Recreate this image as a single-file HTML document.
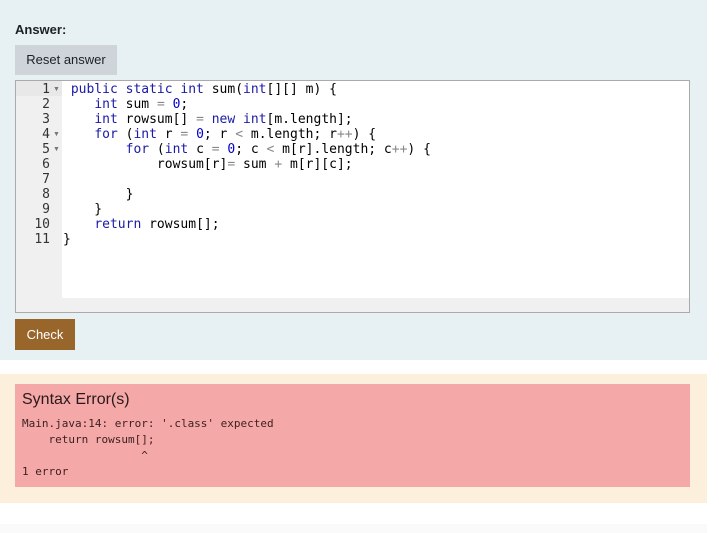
<!DOCTYPE html>
<html><head><style>
body{margin:0;width:719px;height:533px;background:#fff;font-family:"Liberation Sans",sans-serif;position:relative;overflow:hidden}
.top{position:absolute;left:0;top:0;width:707px;height:360px;background:#e7f1f4}
.ans{position:absolute;left:15px;top:22px;font-size:13px;font-weight:bold;color:#1d2125}
.reset{position:absolute;left:15px;top:45px;width:102px;height:30px;background:#ced4da;font-size:13px;color:#1d2125;line-height:30px;text-align:center}
.ed{position:absolute;left:15px;top:80px;width:673px;height:231px;border:1px solid #aaa;background:#f0f0f0}
.code{position:absolute;left:46px;top:0;width:627px;height:217px;background:#fff}
.hl{position:absolute;left:0;top:0;width:673px;height:15px;background:#e8e8e8}
pre{margin:0;font-family:"DejaVu Sans Mono",monospace;font-size:13px;line-height:15px}
.g{position:absolute;left:0;top:1px;width:34px;text-align:right;color:#333}
.c{position:absolute;left:47px;top:1px;color:#000}
.k{color:#1a1aa6}.n{color:#0000cd}.o{color:#888}
.fold{position:absolute;left:37px;font-size:7px;color:#777}
.check{position:absolute;left:15px;top:319px;width:60px;height:31px;background:#98652a;color:#fff;font-size:13px;line-height:31px;text-align:center}
.cream{position:absolute;left:0;top:374px;width:707px;height:129px;background:#fcefdc}
.err{position:absolute;left:15px;top:384px;width:675px;height:103px;background:#f4a8a8;color:#3b1f1f}
.err h{position:absolute;left:7px;top:7px;font-size:16px;color:#2a1a1a}
.err pre{position:absolute;left:7px;top:32px;font-size:11px;line-height:16px}
.bot{position:absolute;left:0;top:524px;width:707px;height:9px;background:#fafafa}
</style></head><body>
<div class="top"></div>
<div class="ans">Answer:</div>
<div class="reset">Reset answer</div>
<div class="ed">
<div class="hl"></div>
<div class="code"></div>
<pre class="g">1
2
3
4
5
6
7
8
9
10
11</pre>
<div class="fold" style="top:5px">▼</div><div class="fold" style="top:50px">▼</div><div class="fold" style="top:65px">▼</div>
<pre class="c"> <span class="k">public static int</span> sum(<span class="k">int</span>[][] m) {
    <span class="k">int</span> sum <span class="o">=</span> <span class="n">0</span>;
    <span class="k">int</span> rowsum[] <span class="o">=</span> <span class="k">new int</span>[m.length];
    <span class="k">for</span> (<span class="k">int</span> r <span class="o">=</span> <span class="n">0</span>; r <span class="o">&lt;</span> m.length; r<span class="o">++</span>) {
        <span class="k">for</span> (<span class="k">int</span> c <span class="o">=</span> <span class="n">0</span>; c <span class="o">&lt;</span> m[r].length; c<span class="o">++</span>) {
            rowsum[r]<span class="o">=</span> sum <span class="o">+</span> m[r][c];

        }
    }
    <span class="k">return</span> rowsum[];
}</pre>
</div>
<div class="check">Check</div>
<div class="cream"></div>
<div class="err"><h>Syntax Error(s)</h><pre>Main.java:14: error: '.class' expected
    return rowsum[];
                  ^
1 error</pre></div>
<div class="bot"></div>
</body></html>
